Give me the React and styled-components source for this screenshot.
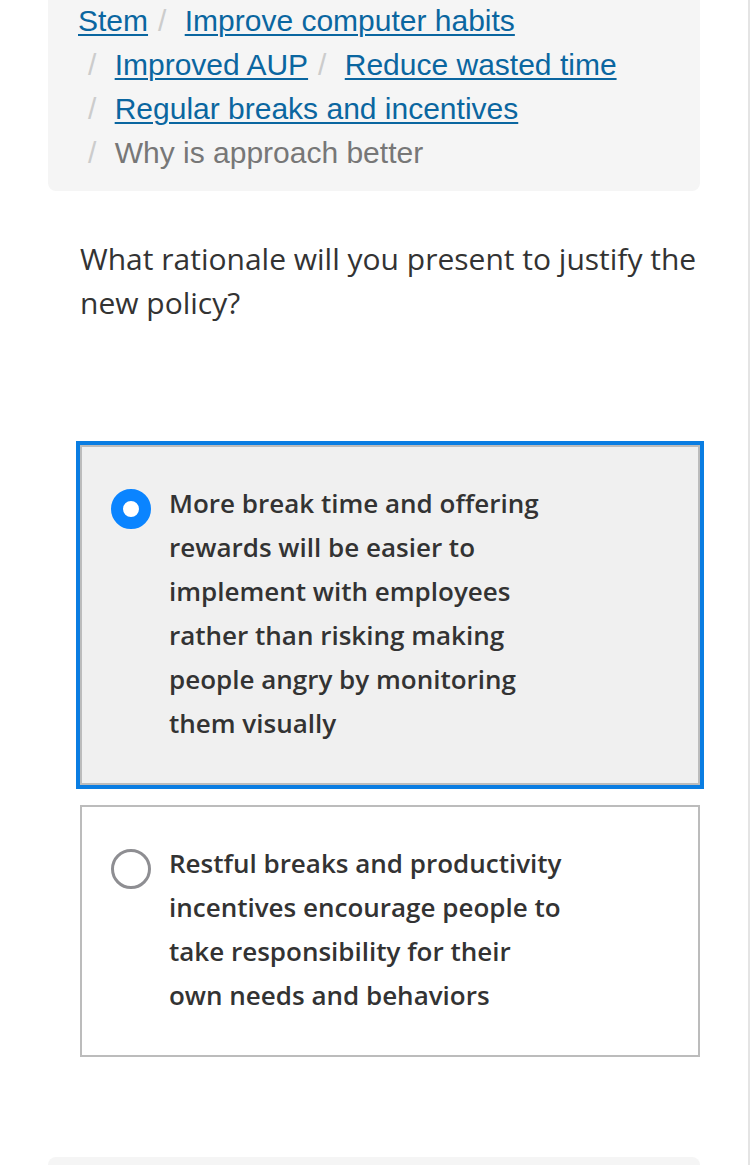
import React from "react";
import styled, { createGlobalStyle } from "styled-components";

const GlobalStyle = createGlobalStyle`
  body {
    margin: 0;
    background: #fff;
  }
`;

const Page = styled.div`
  box-sizing: border-box;
  width: 750px;
  min-height: 1165px;
  overflow: hidden;
  border-right: 2px solid #e4e4e4;
`;

const Content = styled.div`
  margin-top: -17px;
  padding: 0 48px;
`;

const Breadcrumb = styled.ol`
  display: flex;
  flex-wrap: wrap;
  list-style: none;
  margin: 0 0 46px;
  padding: 16px 30px;
  background: #f5f5f5;
  border-radius: 8px;
`;

const Crumb = styled.li`
  font-family: "Liberation Sans", Arial, sans-serif;
  font-size: 30px;
  line-height: 44px;
  color: #777;

  & + &::before {
    content: "/\\00a0";
    padding: 0 10px;
    color: #ccc;
  }

  a {
    color: #0a66a0;
    text-decoration: underline;
    text-underline-offset: 3px;
    text-decoration-thickness: 2px;
  }
`;

const Question = styled.p`
  margin: 0 0 120px 32px;
  font-family: "Open Sans", sans-serif;
  font-size: 30px;
  line-height: 44px;
  color: #333;
`;

const Options = styled.div`
  display: flex;
  flex-direction: column;
  gap: 20px;
  padding-left: 32px;
`;

const Option = styled.label`
  display: flex;
  align-items: flex-start;
  gap: 18px;
  padding: 34px 30px 38px 29px;
  border: 2px solid #bcbcbc;
  background: ${(p) => (p.$selected ? "#f0f0f0" : "#fff")};
  outline: ${(p) => (p.$selected ? "4px solid #0a7de2" : "none")};
  cursor: pointer;
`;

const Radio = styled.span`
  box-sizing: border-box;
  flex: none;
  width: 40px;
  height: 40px;
  margin-top: 8px;
  border-radius: 50%;
  background: #fff;
  border: ${(p) => (p.$checked ? "12px solid #0a84ff" : "3px solid #8e8e92")};
`;

const OptionText = styled.span`
  max-width: 396px;
  font-family: "Open Sans", sans-serif;
  font-weight: 600;
  font-size: 26px;
  line-height: 44px;
  color: #333;
`;

const NextPanel = styled.div`
  height: 24px;
  margin-top: 100px;
  background: #f5f5f5;
  border-radius: 8px 8px 0 0;
`;

const crumbs = [
  { label: "Stem", href: "#" },
  { label: "Improve computer habits", href: "#" },
  { label: "Improved AUP", href: "#" },
  { label: "Reduce wasted time", href: "#" },
  { label: "Regular breaks and incentives", href: "#" },
  { label: "Why is approach better" },
];

const answers = [
  {
    id: "a",
    text: "More break time and offering rewards will be easier to implement with employees rather than risking making people angry by monitoring them visually",
  },
  {
    id: "b",
    text: "Restful breaks and productivity incentives encourage people to take responsibility for their own needs and behaviors",
  },
];

export default function App() {
  const [selected, setSelected] = React.useState("a");
  return (
    <Page>
      <GlobalStyle />
      <Content>
        <Breadcrumb>
          {crumbs.map((c) => (
            <Crumb key={c.label}>
              {c.href ? <a href={c.href}>{c.label}</a> : c.label}
            </Crumb>
          ))}
        </Breadcrumb>
        <Question>
          What rationale will you present to justify the new policy?
        </Question>
        <Options>
          {answers.map((a) => (
            <Option
              key={a.id}
              $selected={selected === a.id}
              onClick={() => setSelected(a.id)}
            >
              <Radio $checked={selected === a.id} />
              <OptionText>{a.text}</OptionText>
            </Option>
          ))}
        </Options>
        <NextPanel />
      </Content>
    </Page>
  );
}
